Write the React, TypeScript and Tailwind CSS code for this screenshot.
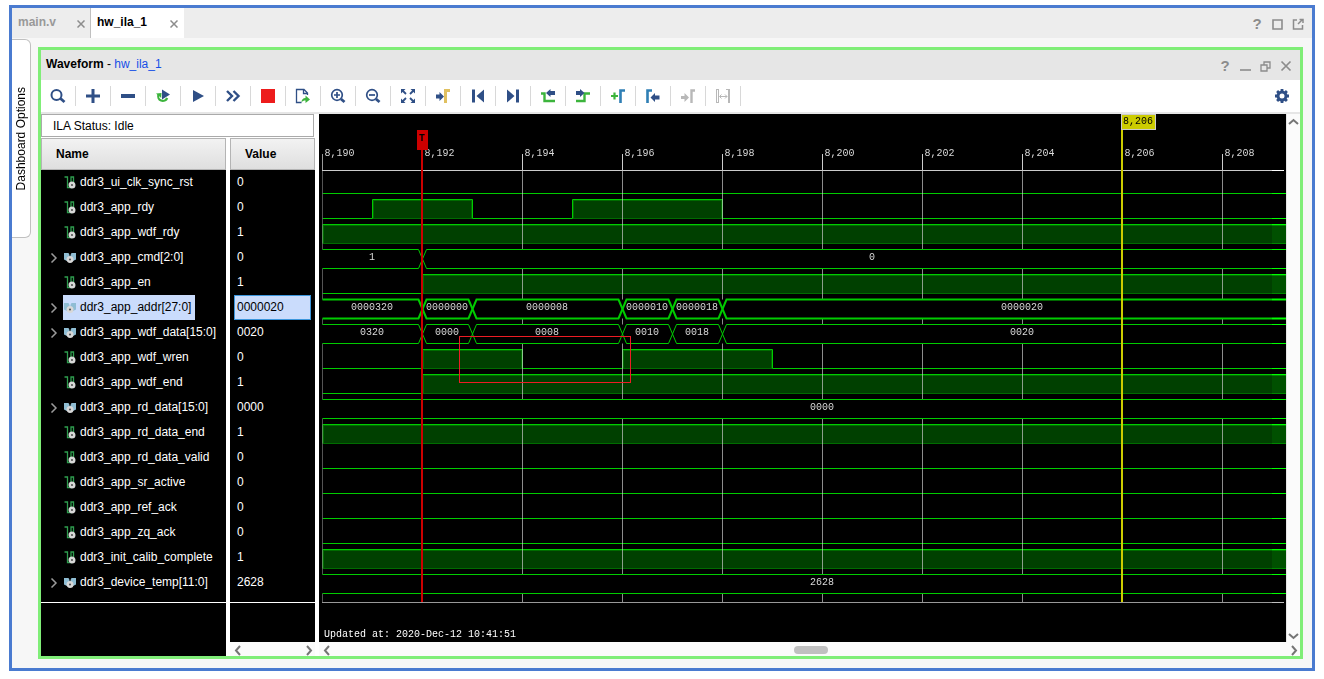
import React from "react";

type Segment = { from: number; to: number; label?: string; high?: boolean };
type Signal = { name: string; value: string; bus?: boolean; selected?: boolean; segments: Segment[] };

const FIRST = 8190;
const LAST = 8210;
const STEP = 50;
const ROW = 25;

const high = (from: number, to = LAST): Segment => ({ from, to, high: true });
const bits = (name: string, value: string, segments: Segment[] = []): Signal => ({ name, value, segments });

const addressSteps = (digits: number): Segment[] =>
  [
    [8190, 8192, "320"],
    [8192, 8193, "0"],
    [8193, 8196, "8"],
    [8196, 8197, "10"],
    [8197, 8198, "18"],
    [8198, 8210, "20"],
  ].map(([from, to, label]) => ({
    from: from as number,
    to: to as number,
    label: (label as string).padStart(digits, "0"),
  }));

const signals: Signal[] = [
  bits("ddr3_ui_clk_sync_rst", "0"),
  bits("ddr3_app_rdy", "0", [high(8191, 8193), high(8195, 8198)]),
  bits("ddr3_app_wdf_rdy", "1", [high(FIRST)]),
  {
    name: "ddr3_app_cmd[2:0]",
    value: "0",
    bus: true,
    segments: [
      { from: 8190, to: 8192, label: "1" },
      { from: 8192, to: LAST, label: "0" },
    ],
  },
  bits("ddr3_app_en", "1", [high(8192)]),
  { name: "ddr3_app_addr[27:0]", value: "0000020", bus: true, selected: true, segments: addressSteps(7) },
  { name: "ddr3_app_wdf_data[15:0]", value: "0020", bus: true, segments: addressSteps(4) },
  bits("ddr3_app_wdf_wren", "0", [high(8192, 8194), high(8196, 8199)]),
  bits("ddr3_app_wdf_end", "1", [high(8192)]),
  { name: "ddr3_app_rd_data[15:0]", value: "0000", bus: true, segments: [{ from: FIRST, to: LAST, label: "0000" }] },
  bits("ddr3_app_rd_data_end", "1", [high(FIRST)]),
  bits("ddr3_app_rd_data_valid", "0"),
  bits("ddr3_app_sr_active", "0"),
  bits("ddr3_app_ref_ack", "0"),
  bits("ddr3_app_zq_ack", "0"),
  bits("ddr3_init_calib_complete", "1", [high(FIRST)]),
  { name: "ddr3_device_temp[11:0]", value: "2628", bus: true, segments: [{ from: FIRST, to: LAST, label: "2628" }] },
];

const NAVY = "#2f4f86";
const GREEN = "#3cb43c";
const BLUE = "#2f7fb5";
const GREY = "#b8b8b8";

const timeX = (t: number) => 3.5 + (t - FIRST) * STEP;

function Icon({ children, size = 16 }: { children: React.ReactNode; size?: number }) {
  return (
    <svg width={size} height={size} viewBox={`0 0 ${size} ${size}`} fill="none" aria-hidden="true">
      {children}
    </svg>
  );
}

const tools: { label: string; art: React.ReactNode; disabled?: boolean }[] = [
  {
    label: "Search",
    art: (
      <g stroke={NAVY} strokeWidth="2">
        <circle cx="6.500" cy="7" r="5" />
        <path d="M10.500 10.500l4 3.500" strokeWidth="2.800" />
      </g>
    ),
  },
  { label: "Add", art: <path d="M8 1v14M1 8h14" stroke={NAVY} strokeWidth="3" /> },
  { label: "Remove", art: <path d="M1 8h14" stroke={NAVY} strokeWidth="4" /> },
  {
    label: "Run trigger repeatedly",
    art: (
      <>
        <path d="M3.500 6.500a4.600 4.600 0 1 0 8.700 3.500" stroke={GREEN} strokeWidth="2.200" />
        <path d="M1 5.500l5.500-.5-.3 5z" fill={GREEN} />
        <path d="M7 1.500l8 5-8 5z" fill={NAVY} />
      </>
    ),
  },
  { label: "Run trigger", art: <path d="M3 2L14 8 3 14z" fill={NAVY} /> },
  {
    label: "Run trigger immediate",
    art: <path d="M2 3l5 5-5 5M8.500 3l5 5-5 5" stroke={NAVY} strokeWidth="2.400" />,
  },
  { label: "Stop trigger", art: <path d="M1 1h14v14H1z" fill="#ed1c1c" /> },
  {
    label: "Export data",
    art: (
      <>
        <path d="M12.500 7V5L9 1.500H1.500v13h5M8.500 1.500V5.500h4" stroke={NAVY} strokeWidth="1.300" />
        <path d="M6.500 14.500c0-3 1.500-4.500 4-4.500V7.500l4.500 4-4.500 3.500v-2.500c-2 0-3 .5-4 2z" fill={GREEN} />
      </>
    ),
  },
  {
    label: "Zoom in",
    art: (
      <g stroke={NAVY} strokeWidth="1.700">
        <circle cx="7" cy="7" r="5.300" />
        <path d="M11 11l3.500 3" strokeWidth="2.800" />
        <path d="M4 7h6M7 4v6" />
      </g>
    ),
  },
  {
    label: "Zoom out",
    art: (
      <g stroke={NAVY} strokeWidth="1.700">
        <circle cx="7" cy="7" r="5.300" />
        <path d="M11 11l3.500 3" strokeWidth="2.800" />
        <path d="M4 7h6" />
      </g>
    ),
  },
  {
    label: "Zoom fit",
    art: (
      <>
        <path d="M1 1h4.500L1 5.500zM15 1v4.500L10.500 1zM1 15v-4.500L5.500 15zM15 15h-4.500l4.500-4.500z" fill={NAVY} />
        <path d="M2 2l4 4M14 2l-4 4M2 14l4-4M14 14l-4-4" stroke={NAVY} strokeWidth="1.800" />
      </>
    ),
  },
  {
    label: "Go to cursor",
    art: (
      <>
        <path d="M1 6.500h3.500V4L9 8.500 4.500 13v-2.500H1z" fill={NAVY} />
        <path d="M10.500 15V2.500H15" stroke="#e0c060" strokeWidth="3" />
      </>
    ),
  },
  { label: "Go to time 0", art: <path d="M2 1.500h3v13H2zM14 1.500v13L6.500 8z" fill={NAVY} /> },
  { label: "Go to last time", art: <path d="M11 1.500h3v13h-3zM2 1.500v13L9.500 8z" fill={NAVY} /> },
  {
    label: "Previous transition",
    art: (
      <>
        <path d="M1 5.500h3.500v7.500H15" stroke={GREEN} strokeWidth="2.400" />
        <path d="M6 5L10.500 1v2H15v4h-4.500v2z" fill={NAVY} />
      </>
    ),
  },
  {
    label: "Next transition",
    art: (
      <>
        <path d="M1 13h8.500V5.500H15" stroke={GREEN} strokeWidth="2.400" />
        <path d="M9.500 5L5 1v2H1v4h4v2z" fill={NAVY} />
      </>
    ),
  },
  {
    label: "Add marker",
    art: (
      <>
        <path d="M1 8h7M4.500 4.500v7" stroke={GREEN} strokeWidth="2.200" />
        <path d="M10.500 15V2.500H15" stroke={BLUE} strokeWidth="2.600" />
      </>
    ),
  },
  {
    label: "Previous marker",
    art: (
      <>
        <path d="M2.500 15V2.500H7" stroke={BLUE} strokeWidth="2.600" />
        <path d="M5.500 9.500L10 5v2.500h4.500v4H10V14z" fill={NAVY} />
      </>
    ),
  },
  {
    label: "Next marker",
    disabled: true,
    art: (
      <>
        <path d="M1 8h3.500V5L9 9.500 4.500 14v-3H1z" fill={GREY} />
        <path d="M11.500 15V2.500H15" stroke={GREY} strokeWidth="2.400" />
      </>
    ),
  },
  {
    label: "Swap cursors",
    disabled: true,
    art: (
      <path
        d="M1.500 1v14M3.500 2v12M1 1.500h3M1 14.500h3M13.500 1v14M11 1.500h4M14.500 1v14M5 8.500h7M6.500 6.500l-2 2 2 2M10 6.500l2 2-2 2"
        stroke={GREY}
      />
    ),
  },
];

function Chevron({ dir }: { dir: "left" | "right" | "up" | "down" }) {
  const d = {
    left: "M8 1L4 5.500 8 10",
    right: "M3 1l4 4.500L3 10",
    up: "M1 8l4.500-4L10 8",
    down: "M1 3l4.500 4L10 3",
  }[dir];
  return (
    <svg width="11" height="11" viewBox="0 0 11 11" fill="none" aria-hidden="true">
      <path d={d} stroke="currentColor" strokeWidth="2" />
    </svg>
  );
}

function GearIcon() {
  return (
    <Icon>
      <circle cx="8" cy="8" r="4" stroke={NAVY} strokeWidth="3" />
      <path
        d="M8 1v2M8 13v2M1 8h2M13 8h2M3.100 3.100l1.400 1.400M11.500 11.500l1.400 1.400M3.100 12.900l1.400-1.400M11.500 4.500l1.400-1.400"
        stroke={NAVY}
        strokeWidth="2.800"
      />
    </Icon>
  );
}

function BitIcon() {
  return (
    <svg width="12" height="13" viewBox="0 0 12 13" fill="none" className="shrink-0" aria-hidden="true">
      <path d="M.5 1h3v10.500H7V1h2.500v6" stroke="#2f9e4f" strokeWidth="1.300" />
      <circle cx="8" cy="9" r="2.300" fill="#555" stroke="#d8d8d8" strokeWidth="2.400" />
    </svg>
  );
}

function BusIcon() {
  return (
    <svg width="12" height="13" viewBox="0 0 12 13" fill="none" className="shrink-0" aria-hidden="true">
      <path d="M0 2h4.500l1 2v5L3 10 0 8.500zM12 2H7.500l-1 2v5L9 10l3-1.500z" fill="#8fbdd3" />
      <circle cx="6" cy="8.500" r="2.300" fill="#555" stroke="#d8d8d8" strokeWidth="2.400" />
    </svg>
  );
}

function CloseIcon() {
  return (
    <svg width="8" height="8" viewBox="0 0 8 8" aria-hidden="true">
      <path d="M.5.500l7 7M7.500.500l-7 7" stroke="#8c8c8c" strokeWidth="1.500" />
    </svg>
  );
}

function BitTrace({ signal, index }: { signal: Signal; index: number }) {
  const top = 60.5 + index * ROW;
  const bottom = top + 19;
  let d = `M${timeX(FIRST)} ${bottom}`;
  for (const s of signal.segments) {
    d += `H${timeX(s.from)}V${top}H${timeX(s.to)}V${bottom}`;
  }
  d += `H${timeX(LAST)}`;
  return (
    <g>
      <path d={d} stroke="#00cc00" fill="none" />
      {signal.segments.map((s) => (
        <rect
          key={s.from}
          x={timeX(s.from) + 1}
          y={top + 1}
          width={timeX(s.to) - timeX(s.from) - 2}
          height={18}
          fill="#004000"
          stroke="#006c00"
        />
      ))}
    </g>
  );
}

function BusTrace({ signal, index }: { signal: Signal; index: number }) {
  const top = 60.5 + index * ROW;
  const bottom = top + 19;
  const mid = top + 9.5;
  const edge = (s: Segment, y: number) => {
    const a = timeX(s.from);
    const b = timeX(s.to);
    const start = s.from === FIRST ? `M${a} ${y}` : `M${a} ${mid}L${a + 4} ${y}`;
    const end = s.to === LAST ? `H${b}` : `H${b - 4}L${b} ${mid}`;
    return start + end;
  };
  return (
    <g stroke="#00cc00" strokeWidth={signal.selected ? 2 : 1} fill="none">
      <rect x="0" y={top} width={timeX(LAST)} height="19" fill="#000" stroke="none" />
      {signal.segments.map((s) => (
        <path key={s.from} d={edge(s, top) + edge(s, bottom)} />
      ))}
    </g>
  );
}

function Waveform() {
  const ticks = Array.from({ length: (LAST - FIRST) / 2 }, (_, i) => FIRST + i * 2);
  const format = (t: number) => `${Math.floor(t / 1000)},${t % 1000}`;
  return (
    <svg
      role="img"
      aria-label="Captured waveforms"
      className="isolate block h-[528px] w-full bg-black font-['Liberation_Mono',monospace] text-[10px]"
    >
      {signals.map((s, i) => (s.bus ? null : <BitTrace key={s.name} signal={s} index={i} />))}
      {ticks.map((t) => (
        <g key={t}>
          <path d={`M${timeX(t)} 56V488`} stroke={t === FIRST ? "#777" : "#c8c8c8"} strokeOpacity="0.7" />
          <path d={`M${timeX(t)} 40V56`} stroke={t === FIRST ? "#999" : "#ccc"} />
          <text x={timeX(t) + 2} y="42" fill="#d8d8d8">
            {format(t)}
          </text>
        </g>
      ))}
      {signals.map((s, i) => (s.bus ? <BusTrace key={s.name} signal={s} index={i} /> : null))}
      {signals.map((s, i) =>
        s.segments.map((seg) =>
          seg.label ? (
            <text
              key={`${s.name}${seg.from}`}
              x={Math.round((Math.max(timeX(seg.from), 0) + timeX(seg.to)) / 2) - 1}
              y={71 + i * ROW}
              textAnchor="middle"
              fill="#d8d8d8"
            >
              {seg.label}
            </text>
          ) : null,
        ),
      )}
      <rect x="3" y="56" height="1" className="w-[calc(100%-5px)]" fill="#ccc" />
      <rect x="3" y="488" height="1" className="w-[calc(100%-5px)]" fill="#999" />
      <rect y="56" width="14" height="433" fill="#333" className="mix-blend-color-dodge [x:calc(100%-14px)]" />

      <path d="M103 30V488" stroke="#cc0000" strokeWidth="2" />
      <rect x="98" y="16" width="11" height="20" fill="#cc0000" />
      <text x="103" y="27" textAnchor="middle" fill="#000" className="font-bold">
        T
      </text>

      <path d="M803 0V488" stroke="#cccc00" strokeWidth="2" />
      <rect x="802.500" y="0.500" width="34" height="15" fill="#cccc00" stroke="#ccc" />
      <text x="804" y="10" fill="#000">
        8,206
      </text>

      <rect x="140.500" y="222.500" width="171" height="46" fill="none" stroke="#ed1c24" />
      <text x="5" y="523" fill="#fff">
        Updated at: 2020-Dec-12 10:41:51
      </text>
    </svg>
  );
}

function SignalTable() {
  return (
    <table className="w-full table-fixed border-collapse text-left text-white">
      <colgroup>
        <col className="w-[185px]" />
        <col className="w-1" />
        <col />
      </colgroup>
      <thead className="bg-linear-to-b from-[#f3f3f3] to-[#dedede] text-black">
        <tr className="h-8">
          <th className="p-0">
            <div className="flex h-8 items-center border border-[#b4b4b4] pl-3.5">Name</div>
          </th>
          <td className="bg-white p-0" />
          <th className="p-0">
            <div className="flex h-8 items-center border border-[#b4b4b4] pl-3.5">Value</div>
          </th>
        </tr>
      </thead>
      <tbody>
        {signals.map((s) => (
          <tr key={s.name} className="h-[25px]">
            <td className="bg-black p-0">
              <div className="flex h-[25px] items-center pl-2">
                <span className="flex w-3.5 shrink-0 text-[#9a9a9a]">
                  {s.bus && (
                    <button aria-label={`Expand ${s.name}`} className="block">
                      <svg width="10" height="10" viewBox="0 0 10 10" fill="none" aria-hidden="true">
                        <path d="M2.500.500l4.500 4.500-4.500 4.500" stroke="currentColor" strokeWidth="1.500" />
                      </svg>
                    </button>
                  )}
                </span>
                <span
                  className={
                    s.selected
                      ? "flex h-full items-center gap-1 bg-[#cadcfc] pr-1 pl-px text-black"
                      : "flex h-full items-center gap-1 pl-px"
                  }
                >
                  {s.bus ? <BusIcon /> : <BitIcon />}
                  <span className="pb-0.5 whitespace-nowrap">{s.name}</span>
                </span>
              </div>
            </td>
            <td className="bg-white p-0" />
            <td className="bg-black p-0">
              <div
                className={
                  s.selected
                    ? "mx-1 flex h-[25px] items-center border border-[#3c96dc] bg-[#cadcfc] pb-0.5 pl-0.5 text-black"
                    : "flex h-[25px] items-center pb-0.5 pl-[7px]"
                }
              >
                {s.value}
              </div>
            </td>
          </tr>
        ))}
      </tbody>
    </table>
  );
}

export default function App() {
  return (
    <div className="min-h-screen bg-white px-[9px] pt-[5px] pb-2 font-['Liberation_Sans',Arial,sans-serif] text-[12px] leading-4 text-black">
      <div className="border-[3px] border-[#4a7bd0] bg-[#f7f7f7]">
        <header className="flex h-[30px] bg-[#ededed] font-bold">
          <div className="flex w-[79px] items-start justify-between border-r border-[#c0c0c0] pt-1.5 pr-[5px] pl-1.5 text-[#999]">
            <a href="#main">main.v</a>
            <button aria-label="Close main.v" className="mt-1.5">
              <CloseIcon />
            </button>
          </div>
          <div className="flex w-[93px] items-start justify-between bg-white pt-1.5 pr-1.5 pl-1.5">
            <a href="#hw_ila_1">hw_ila_1</a>
            <button aria-label="Close hw_ila_1" className="mt-1.5">
              <CloseIcon />
            </button>
          </div>
          <div className="ml-auto flex items-center gap-[9px] pt-0.5 pr-2 text-[#8c8c8c]">
            <button className="w-3 text-[15px]" aria-label="Help">?</button>
            <button aria-label="Maximize">
              <Icon size={11}><path d="M1 1h9v9H1z" stroke="currentColor" strokeWidth="1.600" /></Icon>
            </button>
            <button aria-label="Float">
              <Icon size={12}>
                <path d="M5 2H1.500v9h9V7M7.500 1.500H11V5M10.500 1.500L6 6" stroke="currentColor" strokeWidth="1.500" />
              </Icon>
            </button>
          </div>
        </header>

        <div className="flex">
          <div className="w-[26px] shrink-0 pt-px">
            <button className="flex h-[199px] w-[19px] items-center justify-center rounded-r-md border border-l-0 border-[#c0c0c0] bg-white">
              <span className="rotate-180 whitespace-nowrap [writing-mode:vertical-rl]">Dashboard Options</span>
            </button>
          </div>

          <main className="mt-[9px] mr-[9px] mb-[9px] min-w-0 grow border-[3px] border-[#80ee78] bg-white">
            <div className="flex h-[30px] items-center bg-[#e6e6e6] pr-2 pl-[5px]">
              <h1 className="pb-0.5 whitespace-pre">
                <b>Waveform</b> - <a href="#hw_ila_1" className="text-[#1450e6]">hw_ila_1</a>
              </h1>
              <div className="ml-auto flex items-center gap-[9px] pt-0.5 text-[#8c8c8c]">
                <button className="w-3 text-[15px] font-bold" aria-label="Help">?</button>
                <button aria-label="Minimize">
                  <Icon size={11}><path d="M0 9h11" stroke="currentColor" strokeWidth="1.600" /></Icon>
                </button>
                <button aria-label="Restore">
                  <Icon size={11}><path d="M4 4V1h6v6H7M1 4h6v6H1z" stroke="currentColor" strokeWidth="1.300" /></Icon>
                </button>
                <button aria-label="Close">
                  <Icon size={12}><path d="M1.500 1.500l9 9M10.500 1.500l-9 9" stroke="currentColor" strokeWidth="1.700" /></Icon>
                </button>
              </div>
            </div>

            <div className="flex h-[34px] items-center border-b-2 border-[#e6e6e6]">
              {tools.map((t) => (
                <button
                  key={t.label}
                  aria-label={t.label}
                  disabled={t.disabled}
                  className="flex h-5 w-[35px] shrink-0 items-center justify-center border-r border-[#d8d8d8]"
                >
                  <Icon>{t.art}</Icon>
                </button>
              ))}
              <button aria-label="Settings" className="mr-2.5 ml-auto">
                <GearIcon />
              </button>
            </div>

            <div className="flex gap-1">
              <section className="flex w-[274px] shrink-0 flex-col">
                <div className="mr-px mb-px flex h-[23px] items-center border border-[#aaa] pl-[11px]">ILA Status: Idle</div>
                <SignalTable />
                <div className="flex grow gap-1">
                  <div className="w-[185px] bg-black pt-[7px]">
                    <div className="h-px bg-white" />
                  </div>
                  <div className="flex grow flex-col">
                    <div className="grow bg-black pt-[7px]">
                      <div className="h-px bg-white" />
                    </div>
                    <div className="flex h-3.5 items-center justify-between bg-[#fbfbfb] pt-0.5 pl-0.5 text-[#757575]">
                      <button aria-label="Scroll values left"><Chevron dir="left" /></button>
                      <button aria-label="Scroll values right"><Chevron dir="right" /></button>
                    </div>
                  </div>
                </div>
              </section>

              <section className="min-w-0 grow">
                <div className="flex">
                  <div className="min-w-0 grow">
                    <Waveform />
                  </div>
                  <div className="flex w-3.5 shrink-0 flex-col items-center justify-between border-l border-[#e6e6e6] bg-[#fbfbfb] pt-0.5 text-[#757575]">
                    <button aria-label="Scroll up"><Chevron dir="up" /></button>
                    <button aria-label="Scroll down"><Chevron dir="down" /></button>
                  </div>
                </div>
                <div className="flex h-3.5 items-center bg-[#fbfbfb] pt-0.5 pl-0.5 text-[#757575]">
                  <button aria-label="Scroll waveform left"><Chevron dir="left" /></button>
                  <div className="flex grow justify-center">
                    <div className="h-2 w-[34px] rounded-full bg-[#c0c0c0]" />
                  </div>
                  <button aria-label="Scroll waveform right"><Chevron dir="right" /></button>
                </div>
              </section>
            </div>
          </main>
        </div>
      </div>
    </div>
  );
}
